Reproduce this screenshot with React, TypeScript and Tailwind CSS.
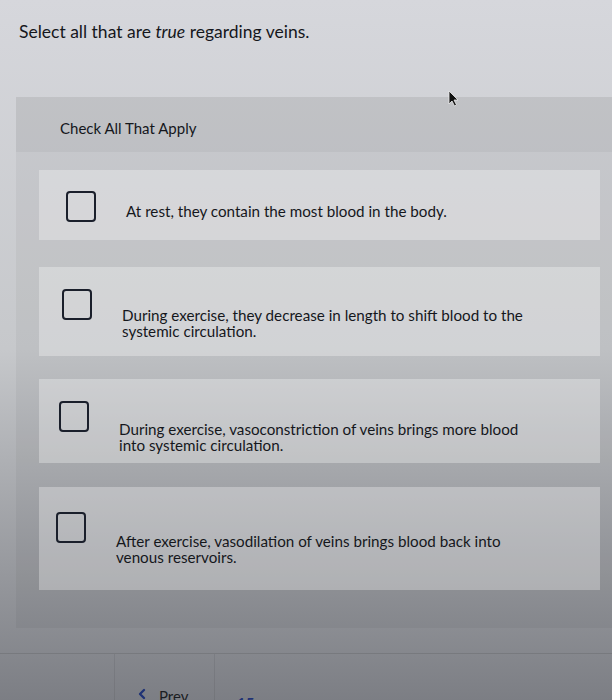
import { ChevronLeft } from "lucide-react";

// per-card spacing follows the (slightly skewed) photo
const OPTIONS = [
  { id: 1, text: "At rest, they contain the most blood in the body.", card: "pt-[21px] pb-[18px] pl-[27px]", txt: "mt-[12px]" },
  { id: 2, text: "During exercise, they decrease in length to shift blood to the systemic circulation.", card: "pt-[22px] pb-[17px] pl-[23px]", txt: "mt-[18px]" },
  { id: 3, text: "During exercise, vasoconstriction of veins brings more blood into systemic circulation.", card: "pt-[22px] pb-[10px] pl-[20px]", txt: "mt-[20px]" },
  { id: 4, text: "After exercise, vasodilation of veins brings blood back into venous reservoirs.", card: "pt-[25px] pb-[25px] pl-[17px]", txt: "mt-[21px]" },
];

function OptionCard({ text, card, txt }: { text: string; card: string; txt: string }) {
  return (
    <div className={`bg-white/30 flex items-start pr-6 ${card}`}>
      <span className="w-[30px] h-[31px] shrink-0 rounded-[4px] border-2 border-[#1a1f2b]" />
      <p className={`ml-[30px] text-[15.2px] leading-[16px] text-[#15171c] max-w-[420px] ${txt}`}>{text}</p>
    </div>
  );
}

export default function App() {
  return (
    <div
      className="relative w-[612px] h-[700px] overflow-hidden bg-gradient-to-b from-[#d6d7dc] via-[#c6c8cb] to-[#7c7e84] text-[#15171c]"
      style={{ fontFamily: "Lato, 'Noto Sans', sans-serif" }}
    >
      <h1 className="pl-[19px] pt-[21px] text-[17.5px] leading-[22px]">
        Select all that are <em>true</em> regarding veins.
      </h1>

      <div className="mt-[54px] ml-[16px] bg-black/[0.04]">
        <div className="pl-[44px] pt-[22px] pb-[15px] text-[15px] leading-[18px] bg-black/[0.04]">
          Check All That Apply
        </div>
        <div className="pl-[23px] pr-[12px] pt-[18px] pb-[38px] flex flex-col">
          {OPTIONS.map((o, i) => (
            <div key={o.id} className={i === 0 ? "" : i === 1 ? "mt-[27px]" : i === 2 ? "mt-[23px]" : "mt-[24px]"}>
              <OptionCard text={o.text} card={o.card} txt={o.txt} />
            </div>
          ))}
        </div>
      </div>

      <div className="mt-[25px] h-[60px] border-t border-black/10 flex text-[#1f3275]">
        <div className="w-[115px] border-r border-black/[0.07]" />
        <div className="w-[100px] border-r border-black/[0.07] pt-[33px] pl-[19px] flex items-start gap-[9px] text-[15px] leading-[18px]">
          <ChevronLeft size={16} strokeWidth={3.5} className="-mt-[1px]" />
          <span className="text-[#1b1d22]">Prev</span>
        </div>
        <div className="pt-[40px] pl-[22px] text-[15px] leading-[18px] font-bold">15</div>
      </div>

      {/* mouse pointer caught in the photo */}
      <svg className="absolute left-[448px] top-[90px]" width="11" height="17" viewBox="0 0 11 17">
        <path d="M1 1 L1 14 L4 11 L6.5 16 L8.5 15 L6 10 L10 10 Z" fill="#111" stroke="#eee" strokeWidth="0.8" />
      </svg>
    </div>
  );
}
